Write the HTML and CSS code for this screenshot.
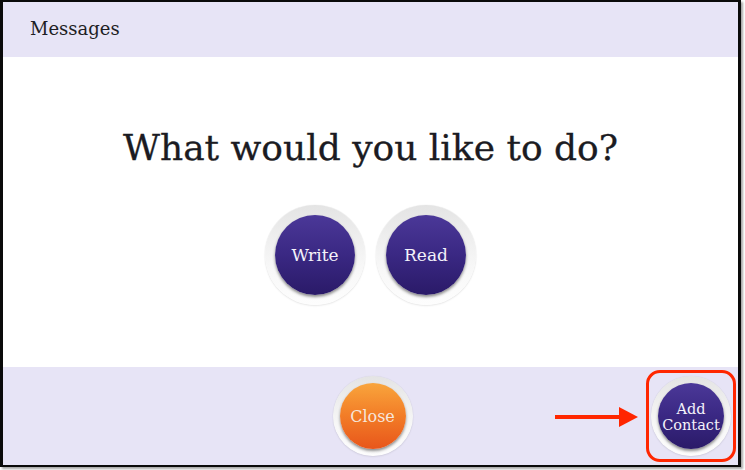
FILE: index.html
```html
<!DOCTYPE html>
<html>
<head>
<meta charset="utf-8">
<link rel="stylesheet" href="styles.css">
</head>
<body>
<div class="window">
  <header class="topbar">Messages</header>
  <main class="content">
    <h1 class="question">What would you like to do?</h1>
    <div class="choices">
      <button class="ring"><span class="disc purple">Write</span></button>
      <button class="ring"><span class="disc purple">Read</span></button>
    </div>
  </main>
  <footer class="bottombar">
    <div class="cell"></div>
    <div class="cell center">
      <button class="ring small"><span class="disc orange">Close</span></button>
    </div>
    <div class="cell right">
      <svg class="arrow" width="83" height="22" viewBox="0 0 83 22">
        <rect x="0" y="9" width="66" height="4" fill="#ff2600"/>
        <polygon points="64,1 83,11 64,21" fill="#ff2600"/>
      </svg>
      <div class="highlight">
        <button class="ring small"><span class="disc purple two">Add<br>Contact</span></button>
      </div>
    </div>
  </footer>
</div>
</body>
</html>
```
FILE: styles.css
```css
html, body {
  margin: 0;
  padding: 0;
  background: #ffffff;
}
body {
  width: 745px;
  height: 470px;
  overflow: hidden;
  font-family: "DejaVu Serif", "Liberation Serif", serif;
}
.window {
  box-sizing: border-box;
  width: 741px;
  height: 467px;
  border: 2px solid #0a0a0a;
  border-left-width: 3px;
  border-right-width: 3px;
  box-shadow: 2px 2px 2px rgba(0, 0, 0, 0.35);
  display: flex;
  flex-direction: column;
  background: #ffffff;
}
.topbar {
  height: 55px;
  flex: none;
  background: #e7e4f6;
  box-sizing: border-box;
  padding-left: 27px;
  display: flex;
  align-items: center;
  font-size: 18px;
  color: #1e1e24;
  padding-bottom: 2px;
}
.content {
  flex: 1;
  display: flex;
  flex-direction: column;
  align-items: center;
  padding-top: 68px;
}
.question {
  margin: 0;
  font-weight: normal;
  font-size: 36px;
  line-height: 46px;
  color: #1b1b22;
  -webkit-text-stroke: 0.3px #1b1b22;
}
.choices {
  margin-top: 34px;
  display: flex;
  gap: 11px;
}
.ring {
  box-sizing: border-box;
  width: 100px;
  height: 100px;
  border-radius: 50%;
  border: none;
  padding: 0;
  margin: 0;
  display: flex;
  align-items: center;
  justify-content: center;
  background: linear-gradient(#e4e4e4, #f7f7f7 60%, #fdfdfd);
  box-shadow: 0 0 1px rgba(0, 0, 0, 0.15), 0 1px 2px rgba(0, 0, 0, 0.08);
  font-family: inherit;
  cursor: pointer;
}
.ring.small {
  width: 80px;
  height: 80px;
}
.disc {
  width: 80px;
  height: 80px;
  border-radius: 50%;
  display: flex;
  align-items: center;
  justify-content: center;
  color: #f4f2fa;
  font-size: 17px;
  box-shadow: 0 2px 3px rgba(0, 0, 0, 0.45);
}
.ring.small .disc {
  width: 66px;
  height: 66px;
  font-size: 16px;
}
.purple {
  background: linear-gradient(#4b3898, #3a2883 50%, #2a1a68);
}
.orange {
  background: linear-gradient(#f9a53c, #f27c27 50%, #e8561b);
  color: #f6e6dc;
}
.ring.small .disc.two {
  font-size: 14.5px;
  line-height: 16px;
  text-align: center;
  padding-top: 1px;
  box-sizing: border-box;
}
.bottombar {
  height: 98px;
  flex: none;
  background: #e7e4f6;
  display: grid;
  grid-template-columns: 1fr auto 1fr;
  align-items: center;
}
.cell {
  display: flex;
  align-items: center;
}
.center {
  justify-content: center;
  padding-left: 4px;
}
.right {
  justify-content: flex-end;
  padding-right: 2px;
  gap: 8px;
}
.arrow {
  display: block;
  margin-top: 1px;
}
.highlight {
  border: 3px solid #ff2600;
  border-radius: 14px;
  padding: 3px 2px;
  display: flex;
}
```
